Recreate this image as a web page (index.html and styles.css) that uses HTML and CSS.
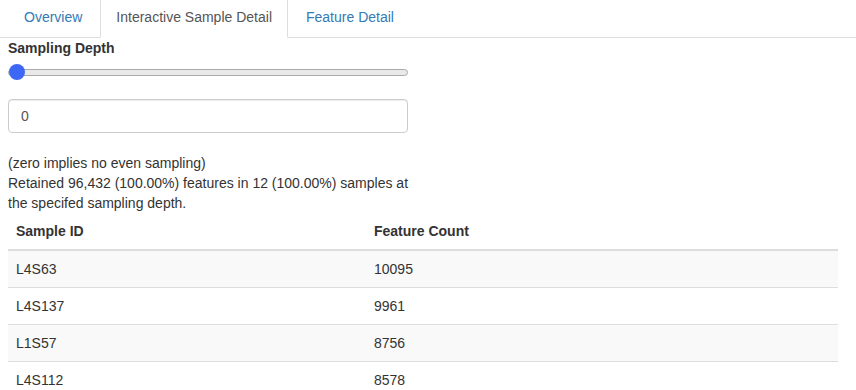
FILE: index.html
```html
<!DOCTYPE html>
<html lang="en">
<head>
    <meta charset="UTF-8">
    <title>Interactive Sample Detail</title>
    <link rel="stylesheet" href="styles.css">
</head>
<body>
    <ul class="nav-tabs">
        <li><a href="#">Overview</a></li>
        <li class="active"><a href="#">Interactive Sample Detail</a></li>
        <li><a href="#">Feature Detail</a></li>
    </ul>
    <div class="content">
        <label for="depth-slider" class="field-label">Sampling Depth</label>
        <input type="range" id="depth-slider" class="depth-slider" min="0" max="10095" value="0">
        <input type="number" id="depth-input" class="form-control" value="0">
        <div class="help-text">
            (zero implies no even sampling)<br>
            Retained 96,432 (100.00%) features in 12 (100.00%) samples at the specifed sampling depth.
        </div>
        <table class="table">
            <thead>
                <tr><th class="col-id">Sample ID</th><th>Feature Count</th></tr>
            </thead>
            <tbody>
                <tr><td>L4S63</td><td>10095</td></tr>
                <tr><td>L4S137</td><td>9961</td></tr>
                <tr><td>L1S57</td><td>8756</td></tr>
                <tr><td>L4S112</td><td>8578</td></tr>
            </tbody>
        </table>
    </div>
</body>
</html>
```
FILE: styles.css
```css
/* General */
body {
    margin: 0;
    padding: 0;
    font-family: "Liberation Sans", Arial, sans-serif;
    font-size: 14px;
    line-height: 20px;
    color: #333;
    background-color: #fff;
}

/* Tabs */
.nav-tabs {
    display: flex;
    list-style: none;
    margin: 0;
    padding: 0 8px;
    border-bottom: 1px solid #ddd;
}

.nav-tabs li {
    margin-bottom: -1px;
    margin-right: 2px;
}

.nav-tabs a {
    display: block;
    padding: 7px 15px 10px;
    border: 1px solid transparent;
    border-top: 0;
    color: #337ab7;
    text-decoration: none;
}

.nav-tabs .active a {
    color: #555;
    background-color: #fff;
    border-color: #ddd;
    border-bottom-color: transparent;
}

/* Controls */
.content {
    padding: 0 8px;
}

.field-label {
    display: block;
    font-weight: bold;
}

.depth-slider {
    -webkit-appearance: none;
    appearance: none;
    display: block;
    width: 400px;
    height: 16px;
    margin: 6px 0 0;
    padding: 0;
    background: transparent;
}

.depth-slider::-webkit-slider-runnable-track {
    height: 7px;
    background-color: #e9e9e9;
    border: 1px solid #aaa;
    border-radius: 4px;
    box-sizing: border-box;
}

.depth-slider::-webkit-slider-thumb {
    -webkit-appearance: none;
    width: 16px;
    height: 16px;
    margin-top: -5.5px;
    border: 0;
    border-radius: 50%;
    background-color: #3d68f5;
}

.form-control {
    display: block;
    width: 400px;
    height: 34px;
    margin-top: 19px;
    padding: 6px 12px;
    box-sizing: border-box;
    font-family: inherit;
    font-size: 14px;
    color: #555;
    border: 1px solid #ccc;
    border-radius: 4px;
    box-shadow: inset 0 1px 1px rgba(0, 0, 0, 0.075);
    -moz-appearance: textfield;
}

.form-control::-webkit-inner-spin-button,
.form-control::-webkit-outer-spin-button {
    -webkit-appearance: none;
    margin: 0;
}

.help-text {
    width: 410px;
    margin-top: 20px;
}

/* Table */
.table {
    width: 830px;
    border-collapse: collapse;
    border-spacing: 0;
}

.table th,
.table td {
    padding: 8px;
    text-align: left;
    line-height: 20px;
}

.table th {
    border-bottom: 2px solid #ddd;
}

.table .col-id {
    width: 342px;
}

.table td {
    border-top: 1px solid #ddd;
}

.table tbody tr:nth-child(odd) {
    background-color: #f9f9f9;
}
```
